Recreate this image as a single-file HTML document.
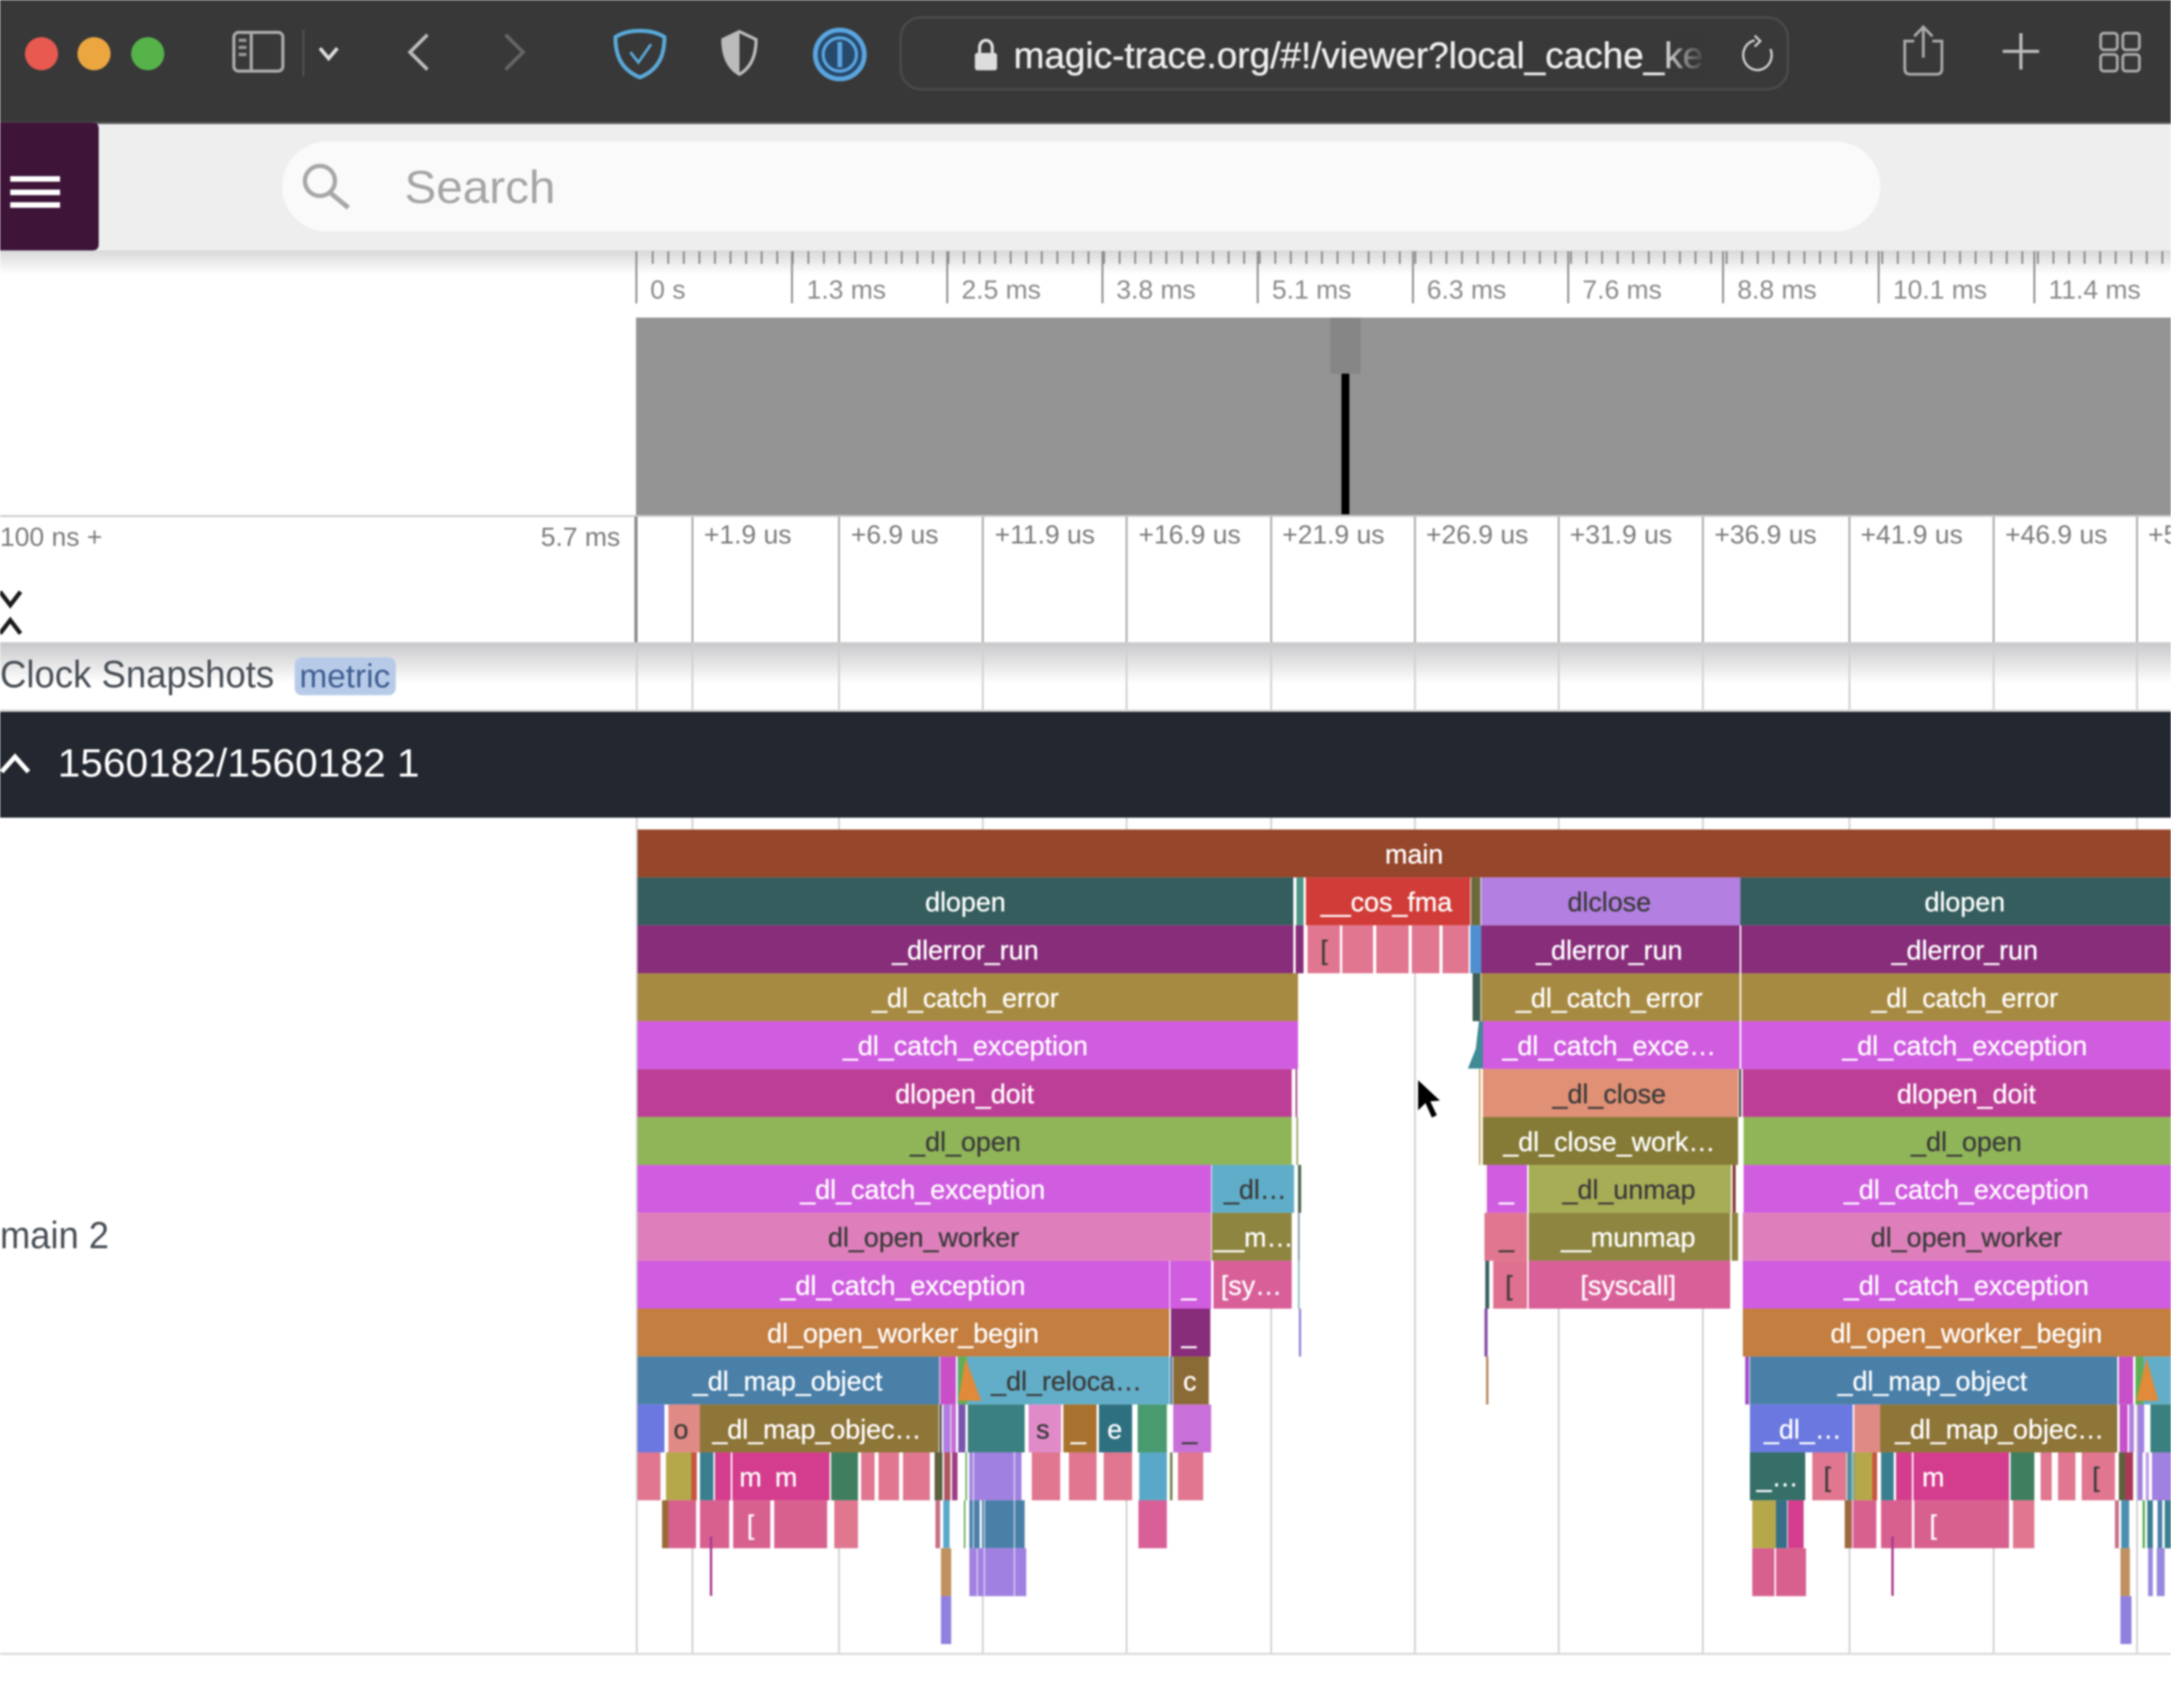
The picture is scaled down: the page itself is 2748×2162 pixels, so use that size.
<!DOCTYPE html>
<html><head><meta charset="utf-8"><title>magic-trace</title>
<style>
html,body{margin:0;padding:0;background:#fff;width:2748px;height:2162px;overflow:hidden}
svg{display:block;filter:blur(1px)}
text{font-family:"Liberation Sans",sans-serif}
g.r rect{height:60.65px}
g.r text{font-size:34px;text-anchor:middle;fill:#fff;stroke:#fff;stroke-width:.35px}
g.r text.d{fill:#3a3a3a;stroke:#3a3a3a}
.tk text{font-size:33.5px;fill:#8a8a8a}
.ax text{font-size:33.5px;fill:#7c7c7c}
</style></head><body>
<svg width="2748" height="2162" viewBox="0 0 2748 2162" xmlns="http://www.w3.org/2000/svg">
<defs>
<linearGradient id="sh1" x1="0" y1="0" x2="0" y2="1"><stop offset="0" stop-color="#d8d8d8"/><stop offset="1" stop-color="#fff"/></linearGradient>
<linearGradient id="sh2" x1="0" y1="0" x2="0" y2="1"><stop offset="0" stop-color="#c8c8cb"/><stop offset="1" stop-color="#fff"/></linearGradient>
<linearGradient id="fade" x1="0" y1="0" x2="1" y2="0"><stop offset="0" stop-color="#383838" stop-opacity="0"/><stop offset="1" stop-color="#383838"/></linearGradient>
</defs>
<rect width="2748" height="2162" fill="#fff"/>

<!-- browser toolbar -->
<rect width="2748" height="156" fill="#383838"/>
<rect y="154" width="2748" height="3" fill="#555"/>
<circle cx="52.5" cy="68" r="21" fill="#e8594f"/>
<circle cx="119" cy="68" r="21" fill="#eba63f"/>
<circle cx="187" cy="68" r="21" fill="#55b34a"/>
<g fill="none" stroke="#aaa" stroke-width="4">
<rect x="296" y="41" width="62" height="49" rx="6"/>
<path d="M318 41V90"/>
</g>
<path d="M302 51h10M302 60h10M302 69h10" stroke="#999" stroke-width="4"/>
<path d="M384 38V97" stroke="#555" stroke-width="2"/>
<path d="M405 61L416 74L427 61" fill="none" stroke="#ddd" stroke-width="4.5"/>
<path d="M541 44L519 66L541 88" fill="none" stroke="#bbb" stroke-width="4.5"/>
<path d="M640 44L662 66L640 88" fill="none" stroke="#666" stroke-width="4.5"/>
<path d="M810 39C795 39 785 43 779 47C779 70 786 88 810 98C834 88 841 70 841 47C835 43 825 39 810 39Z" fill="none" stroke="#5aa9d9" stroke-width="5"/>
<path d="M798 66L808 79L824 56" fill="none" stroke="#5aa9d9" stroke-width="3.5"/>
<path d="M936 40V94C922 86 915 72 915 50Z" fill="#bbb"/>
<path d="M936 40L957 50C957 72 950 86 936 94C922 86 915 72 915 50Z" fill="none" stroke="#bbb" stroke-width="4"/>
<circle cx="1063" cy="69" r="31" fill="#27496b" stroke="#5aa5e0" stroke-width="6"/>
<circle cx="1063" cy="69" r="21" fill="#27496b" stroke="#5aa5e0" stroke-width="4"/>
<rect x="1060" y="53" width="6" height="32" fill="#5aa5e0"/>
<rect x="1140" y="22" width="1123" height="91" rx="26" fill="#393939" stroke="#4b4b4b" stroke-width="3"/>
<rect x="1234" y="67" width="28" height="22" rx="3" fill="#ddd"/>
<path d="M1240 67V60a8 9 0 0 1 16 0V67" fill="none" stroke="#ddd" stroke-width="4"/>
<text x="1283" y="86" font-size="46" fill="#ededed" stroke="#ededed" stroke-width=".5" textLength="873" lengthAdjust="spacingAndGlyphs">magic-trace.org/#!/viewer?local_cache_ke</text>
<rect x="2100" y="40" width="60" height="60" fill="url(#fade)"/>
<path d="M2221 51A18 19 0 1 0 2241 62" fill="none" stroke="#ccc" stroke-width="3"/>
<path d="M2221 45L2228 52L2221 59" fill="none" stroke="#ccc" stroke-width="3"/>
<path d="M2423 52H2411V87q0 7 7 7H2451q7 0 7-7V52H2446M2434.5 73V35M2423 46L2434.5 34L2446 46" fill="none" stroke="#aaa" stroke-width="3.5"/>
<path d="M2558 42V88M2535 65H2581" stroke="#bbb" stroke-width="4"/>
<g fill="none" stroke="#aaa" stroke-width="3.5">
<rect x="2659" y="42" width="21" height="21" rx="4"/><rect x="2687" y="42" width="21" height="21" rx="4"/>
<rect x="2659" y="69" width="21" height="21" rx="4"/><rect x="2687" y="69" width="21" height="21" rx="4"/>
</g>

<!-- app top bar -->
<rect y="157" width="2748" height="160" fill="#eeeeee"/>
<rect x="357" y="179" width="2023" height="114" rx="57" fill="#fafafa"/>
<path d="M0 155H117q8 0 8 8V309q0 8-8 8H0Z" fill="#3e1539"/>
<rect x="13" y="223" width="63" height="7" fill="#fff"/>
<rect x="13" y="240" width="63" height="7" fill="#fff"/>
<rect x="13" y="256" width="63" height="7" fill="#fff"/>
<circle cx="405" cy="229" r="19" fill="none" stroke="#a8a8a8" stroke-width="5.5"/>
<path d="M418 244L441 263" stroke="#a8a8a8" stroke-width="6"/>
<text x="512" y="257" font-size="58" fill="#a5a5a5" textLength="191" lengthAdjust="spacingAndGlyphs">Search</text>

<!-- overview ruler -->
<rect y="317" width="2748" height="30" fill="url(#sh1)"/>
<line x1="825" y1="326" x2="2748" y2="326" stroke="#8c8c8c" stroke-width="16" stroke-dasharray="2.4 17.3"/>
<path d="M805.5 318V384M1002.5 318V384M1199 318V384M1395.5 318V384M1592 318V384M1788.5 318V384M1985 318V384M2181 318V384M2378 318V384M2575 318V384" stroke="#8c8c8c" stroke-width="2.4"/>
<g class="tk">
<text x="823" y="378">0 s</text><text x="1021" y="378">1.3 ms</text><text x="1217" y="378">2.5 ms</text><text x="1413" y="378">3.8 ms</text><text x="1610" y="378">5.1 ms</text><text x="1806" y="378">6.3 ms</text><text x="2003" y="378">7.6 ms</text><text x="2199" y="378">8.8 ms</text><text x="2396" y="378">10.1 ms</text><text x="2593" y="378">11.4 ms</text>
</g>
<rect x="805" y="402" width="1943" height="250" fill="#949494"/>
<rect x="1684" y="402" width="38" height="71" fill="#858685"/>
<rect x="1698" y="473" width="10" height="178" fill="#000"/>
<rect y="652" width="2748" height="2.5" fill="#cfcfcf"/>

<!-- grid -->
<g stroke="#cfcfcf" stroke-width="2.2">
<path d="M876.5 813V2093M1062 813V2093M1244 813V2093M1426 813V2093M1609 813V2093M1791 813V2093M1973 813V2093M2155.5 813V2093M2341 813V2093M2523.5 813V2093M2705 813V2093"/>
<path d="M806 813V2093"/>
</g>

<!-- time axis -->
<g stroke="#a8a8a8" stroke-width="2.4">
<path d="M876.5 654V813M1062 654V813M1244 654V813M1426 654V813M1609 654V813M1791 654V813M1973 654V813M2155.5 654V813M2341 654V813M2523.5 654V813M2705 654V813"/>
</g>
<rect x="803" y="654" width="4" height="159" fill="#8a8a8a"/>
<g class="ax">
<text x="0" y="691">100 ns +</text>
<text x="785" y="691" text-anchor="end">5.7 ms</text>
<text x="891" y="688">+1.9 us</text><text x="1077" y="688">+6.9 us</text><text x="1259" y="688">+11.9 us</text><text x="1441" y="688">+16.9 us</text><text x="1623" y="688">+21.9 us</text><text x="1805" y="688">+26.9 us</text><text x="1987" y="688">+31.9 us</text><text x="2170" y="688">+36.9 us</text><text x="2355" y="688">+41.9 us</text><text x="2538" y="688">+46.9 us</text><text x="2719" y="688">+51.9 us</text>
</g>
<path d="M0 749L13 766L26 749" fill="none" stroke="#1c1c1c" stroke-width="5.5"/>
<path d="M0 802L13 785L26 802" fill="none" stroke="#1c1c1c" stroke-width="5.5"/>

<!-- clock snapshots -->
<rect y="813" width="2748" height="52" fill="url(#sh2)"/>
<path d="M806 813V901M876.5 813V901M1062 813V901M1244 813V901M1426 813V901M1609 813V901M1791 813V901M1973 813V901M2155.5 813V901M2341 813V901M2523.5 813V901M2705 813V901" stroke="#cfcfcf" stroke-width="2.2"/>
<text x="0" y="870" font-size="48" fill="#474e55" textLength="347" lengthAdjust="spacingAndGlyphs">Clock Snapshots</text>
<rect x="373" y="832" width="128" height="48" rx="9" fill="#b7cbe9"/>
<text x="379" y="870" font-size="42" fill="#3f5e8f" textLength="115" lengthAdjust="spacingAndGlyphs">metric</text>
<rect y="898" width="2748" height="3" fill="#d8d8d8"/>

<!-- section header -->
<rect y="901" width="2748" height="134" fill="#23272f"/>
<path d="M2 977L19 958L36 977" fill="none" stroke="#fff" stroke-width="6"/>
<text x="73" y="983" font-size="50" fill="#fff" textLength="458" lengthAdjust="spacingAndGlyphs">1560182/1560182 1</text>

<text x="0" y="1580" font-size="48" fill="#474e55" textLength="138" lengthAdjust="spacingAndGlyphs">main 2</text>

<!-- flame chart -->
<g class="r" transform="translate(0,1050)">
<rect x="807" width="1941" fill="#96462b"/><text x="1790" y="43">main</text>
</g>
<g class="r" transform="translate(0,1110.65)">
<rect x="807" width="830" fill="#355d5d"/><rect x="1641" width="9" fill="#4f9585"/>
<rect x="1653" width="208" fill="#d13c38"/><rect x="1862" width="12" fill="#6b6a3c"/>
<rect x="1875" width="328" fill="#b37fe0"/><rect x="2203" width="545" fill="#355d5d"/>
<text x="1222" y="43">dlopen</text><text x="1755" y="43">__cos_fma</text><text x="2037" y="43" class="d">dlclose</text><text x="2487" y="43">dlopen</text>
</g>
<g class="r" transform="translate(0,1171.3)">
<rect x="807" width="830" fill="#872d7a"/><rect x="1640" width="10" fill="#872d7a"/>
<rect x="1655" width="41" fill="#e0768f"/><rect x="1699" width="39" fill="#e0768f"/><rect x="1742" width="41" fill="#e0768f"/><rect x="1787" width="35" fill="#e0768f"/><rect x="1826" width="33" fill="#e0768f"/>
<rect x="1861" width="14" fill="#4f8fd0"/><rect x="1875" width="327" fill="#872d7a"/><rect x="2204" width="544" fill="#872d7a"/>
<text x="1222" y="43">_dlerror_run</text><text x="1676" y="43" class="d">[</text><text x="2037" y="43">_dlerror_run</text><text x="2487" y="43">_dlerror_run</text>
</g>
<g class="r" transform="translate(0,1231.95)">
<rect x="807" width="836" fill="#a78a42"/><rect x="1864" width="10" fill="#3f5f55"/>
<rect x="1875" width="327" fill="#a78a42"/><rect x="2204" width="544" fill="#a78a42"/>
<text x="1222" y="43">_dl_catch_error</text><text x="2037" y="43">_dl_catch_error</text><text x="2487" y="43">_dl_catch_error</text>
</g>
<g class="r" transform="translate(0,1292.6)">
<rect x="807" width="836" fill="#d05ce0"/><polygon points="1872,0 1877,0 1877,60 1858,60 1868,35" fill="#3f8a95"/>
<rect x="1877" width="325" fill="#d05ce0"/><rect x="2204" width="544" fill="#d05ce0"/>
<text x="1222" y="43">_dl_catch_exception</text><text x="2037" y="43">_dl_catch_exce…</text><text x="2487" y="43">_dl_catch_exception</text>
</g>
<g class="r" transform="translate(0,1353.25)">
<rect x="807" width="828" fill="#bd3e96"/><rect x="1640" width="2" fill="#a03e80"/><rect x="1872" width="2" fill="#c9a860"/>
<rect x="1877" width="323" fill="#e09075"/><rect x="2201" width="3" fill="#555"/><rect x="2206" width="542" fill="#bd3e96"/>
<text x="1221" y="43">dlopen_doit</text><text x="2037" y="43" class="d">_dl_close</text><text x="2489" y="43">dlopen_doit</text>
</g>
<g class="r" transform="translate(0,1413.9)">
<rect x="807" width="828" fill="#8fb558"/><rect x="1641" width="2" fill="#8f9f58"/><rect x="1872" width="2" fill="#c9a860"/>
<rect x="1877" width="323" fill="#857a36"/><rect x="2207" width="541" fill="#8fb558"/>
<text x="1222" y="43" class="d">_dl_open</text><text x="2037" y="43">_dl_close_work…</text><text x="2489" y="43" class="d">_dl_open</text>
</g>
<g class="r" transform="translate(0,1474.55)">
<rect x="807" width="726" fill="#d05ce0"/><rect x="1534" width="104" fill="#5fadc8"/><rect x="1643" width="4" fill="#4f6a50"/>
<rect x="1882" width="51" fill="#d05ce0"/><rect x="1935" width="256" fill="#a7ad55"/><rect x="2193" width="4" fill="#8a3a3a"/><rect x="2207" width="541" fill="#d05ce0"/>
<text x="1168" y="43">_dl_catch_exception</text><text x="1589" y="43" class="d">_dl…</text><text x="1907" y="43">_</text><text x="2062" y="43" class="d">_dl_unmap</text><text x="2489" y="43">_dl_catch_exception</text>
</g>
<g class="r" transform="translate(0,1535.2)">
<rect x="807" width="726" fill="#de7fbb"/><rect x="1534" width="101" fill="#8e8540"/><rect x="1643" width="2" fill="#7a8ea0"/>
<rect x="1879" width="54" fill="#e0768f"/><rect x="1935" width="255" fill="#8e8540"/><rect x="2192" width="8" fill="#8e8540"/><rect x="2206" width="542" fill="#de7fbb"/>
<text x="1169" y="43" class="d">dl_open_worker</text><text x="1587" y="43">__m…</text><text x="1907" y="43" class="d">_</text><text x="2061" y="43">__munmap</text><text x="2489" y="43" class="d">dl_open_worker</text>
</g>
<g class="r" transform="translate(0,1595.85)">
<rect x="807" width="673" fill="#d05ce0"/><rect x="1481" width="52" fill="#d05ce0"/><rect x="1536" width="99" fill="#d85f98"/><rect x="1643" width="2" fill="#8fb0c0"/>
<rect x="1880" width="5" fill="#3f5f60"/><rect x="1890" width="43" fill="#e0708f"/><rect x="1935" width="255" fill="#d85f98"/><rect x="2206" width="542" fill="#d05ce0"/>
<text x="1143" y="43">_dl_catch_exception</text><text x="1505" y="43">_</text><text x="1584" y="43">[sy…</text><text x="1910" y="43" class="d">[</text><text x="2061" y="43">[syscall]</text><text x="2489" y="43">_dl_catch_exception</text>
</g>
<g class="r" transform="translate(0,1656.5)">
<rect x="807" width="673" fill="#c37e40"/><rect x="1482" width="50" fill="#872d7a"/><rect x="1644" width="3" fill="#9a88d8"/>
<rect x="1879" width="4" fill="#8a4fa8"/><rect x="2206" width="542" fill="#c37e40"/>
<text x="1143" y="43">dl_open_worker_begin</text><text x="1505" y="43">_</text><text x="2489" y="43">dl_open_worker_begin</text>
</g>
<g class="r" transform="translate(0,1717.15)">
<rect x="807" width="382" fill="#4a7fa8"/><rect x="1190" width="20" fill="#c84fc8"/><rect x="1212" width="268" fill="#62aec8"/><rect x="1213" width="11" fill="#5fae55"/>
<polygon points="1222,2 1242,56 1213,56" fill="#e08a3a"/>
<rect x="1481" width="3" fill="#4a7fa8"/><rect x="1485" width="45" fill="#8a6a35"/>
<rect x="1881" width="3" fill="#b88a60"/>
<rect x="2209" width="5" fill="#a050c8"/><rect x="2215" width="465" fill="#4a7fa8"/><rect x="2682" width="18" fill="#c84fc8"/><rect x="2703" width="45" fill="#62aec8"/><rect x="2703" width="10" fill="#5fae55"/>
<polygon points="2717,2 2732,56 2704,56" fill="#e08a3a"/>
<text x="997" y="43">_dl_map_object</text><text x="1350" y="43" class="d">_dl_reloca…</text><text x="1506" y="43">c</text><text x="2446" y="43">_dl_map_object</text>
</g>
<g class="r" transform="translate(0,1777.8)">
<rect x="807" width="34" fill="#6a78e0"/><rect x="846" width="40" fill="#e08a85"/><rect x="886" width="302" fill="#8e7538"/>
<rect x="1189" width="3" fill="#555"/><rect x="1194" width="9" fill="#b07ee0"/><rect x="1204" width="6" fill="#c86ad8"/><rect x="1213" width="9" fill="#7a55b0"/>
<rect x="1225" width="72" fill="#3a8080"/><rect x="1302" width="41" fill="#e08ac8"/><rect x="1346" width="42" fill="#a9722e"/><rect x="1391" width="42" fill="#2f7080"/><rect x="1440" width="37" fill="#4a9a70"/><rect x="1485" width="48" fill="#c870d8"/>
<rect x="2215" width="130" fill="#6a78e0"/><rect x="2347" width="33" fill="#e08a85"/><rect x="2380" width="300" fill="#8e7538"/>
<rect x="2683" width="10" fill="#c84fc8"/><rect x="2695" width="6" fill="#b07ee0"/><rect x="2706" width="8" fill="#a080e0"/><rect x="2722" width="26" fill="#3a8080"/>
<text x="862" y="43" class="d">o</text><text x="1034" y="43">_dl_map_objec…</text><text x="1320" y="43" class="d">s</text><text x="1365" y="43">_</text><text x="1411" y="43">e</text><text x="1506" y="43" class="d">_</text><text x="2282" y="43">_dl_…</text><text x="2531" y="43">_dl_map_objec…</text>
</g>
<g class="r" transform="translate(0,1838.45)">
<rect x="807" width="29" fill="#e0768f"/><rect x="843" width="32" fill="#b5a84a"/><rect x="875" width="7" fill="#c8553f"/><rect x="886" width="17" fill="#3a7f90"/><rect x="905" width="20" fill="#d43d8d"/><rect x="927" width="123" fill="#d43d8d"/>
<rect x="1052" width="34" fill="#3f7f60"/><rect x="1090" width="17" fill="#e0768f"/><rect x="1112" width="26" fill="#e0768f"/><rect x="1143" width="34" fill="#e0768f"/>
<rect x="1183" width="10" fill="#5f6040"/><rect x="1195" width="8" fill="#b0555f"/><rect x="1205" width="7" fill="#a03e80"/><rect x="1222" width="2" fill="#5fae55"/>
<rect x="1227" width="66" fill="#a080e0"/><rect x="1306" width="36" fill="#e0768f"/><rect x="1353" width="35" fill="#e0768f"/><rect x="1397" width="36" fill="#e0768f"/><rect x="1442" width="35" fill="#5aa8c8"/><rect x="1481" width="3" fill="#6a7a40"/><rect x="1491" width="32" fill="#e0768f"/>
<rect x="2215" width="70" fill="#356f68"/><rect x="2294" width="43" fill="#e0768f"/><rect x="2338" width="9" fill="#4f8f9a"/><rect x="2347" width="23" fill="#b5a84a"/><rect x="2370" width="6" fill="#c8553f"/><rect x="2381" width="16" fill="#3a7f90"/><rect x="2400" width="20" fill="#d43d8d"/><rect x="2422" width="121" fill="#d43d8d"/><rect x="2545" width="30" fill="#3f7f60"/><rect x="2583" width="14" fill="#e0768f"/><rect x="2605" width="22" fill="#e0768f"/><rect x="2635" width="42" fill="#e0768f"/><rect x="2682" width="8" fill="#5f6040"/><rect x="2690" width="10" fill="#a83a55"/><rect x="2706" width="6" fill="#a080e0"/><rect x="2716" width="4" fill="#c0a0e8"/><rect x="2724" width="24" fill="#a080e0"/>
<text x="950" y="43">m</text><text x="995" y="43">m</text><text x="2250" y="43">_…</text><text x="2313" y="43" class="d">[</text><text x="2447" y="43">m</text><text x="2653" y="43" class="d">[</text>
</g>
<g class="r" transform="translate(0,1899.1)">
<rect x="838" width="8" fill="#9a6a3a"/><rect x="846" width="35" fill="#d8608f"/><rect x="886" width="37" fill="#d8608f"/><rect x="928" width="47" fill="#d8608f"/><rect x="980" width="67" fill="#d8608f"/><rect x="1056" width="30" fill="#e0768f"/>
<rect x="1184" width="6" fill="#c87088"/><rect x="1194" width="8" fill="#5aa8c8"/><rect x="1220" width="2" fill="#5fae55"/><rect x="1227" width="13" fill="#4a7fa8"/><rect x="1243" width="54" fill="#4a7fa8"/><rect x="1441" width="36" fill="#d85f98"/>
<rect x="2218" width="30" fill="#b5a84a"/><rect x="2248" width="14" fill="#356f88"/><rect x="2263" width="20" fill="#d43d8d"/><rect x="2335" width="8" fill="#9a6a3a"/><rect x="2343" width="32" fill="#d8608f"/><rect x="2381" width="39" fill="#d8608f"/><rect x="2423" width="120" fill="#d8608f"/><rect x="2548" width="27" fill="#e0768f"/><rect x="2677" width="5" fill="#c87088"/><rect x="2685" width="10" fill="#4a8fb0"/><rect x="2712" width="3" fill="#5fae55"/><rect x="2718" width="7" fill="#3a7f90"/><rect x="2731" width="6" fill="#4a7fa8"/><rect x="2740" width="8" fill="#3a7f90"/>
<text x="950" y="43">[</text><text x="2447" y="43">[</text>
</g>
<g class="r" transform="translate(0,1959.75)">
<rect x="1191" width="13" fill="#c09060"/><rect x="1227" width="72" fill="#a080e0"/>
<rect x="2218" width="28" fill="#d8608f"/><rect x="2248" width="38" fill="#d8608f"/><rect x="2684" width="12" fill="#c09060"/><rect x="2719" width="6" fill="#9a88e0"/><rect x="2730" width="10" fill="#9a88e0"/>
</g>
<g class="r" transform="translate(0,2020.4)">
<rect x="1191" width="13" fill="#9080e0"/><rect x="2684" width="14" fill="#9080e0"/>
</g>
<rect x="898.5" y="1945" width="3" height="75" fill="#a83a90"/>
<rect x="2394" y="1945" width="3" height="75" fill="#a83a90"/>
<path d="M1232 1838.5V1960M1237 1960V2020M1246 1899V2020M1284 1838V2020M2345 1838V1960" stroke="#fff" stroke-opacity=".55" stroke-width="2" fill="none"/>

<rect y="2092" width="2748" height="3" fill="#dcdcdc"/>

<!-- cursor -->
<path d="M1794 1365L1794 1408L1804 1398L1812 1416L1820 1412L1812 1395L1825 1394Z" fill="#000" stroke="#fff" stroke-width="2"/>
</svg>
</body></html>
